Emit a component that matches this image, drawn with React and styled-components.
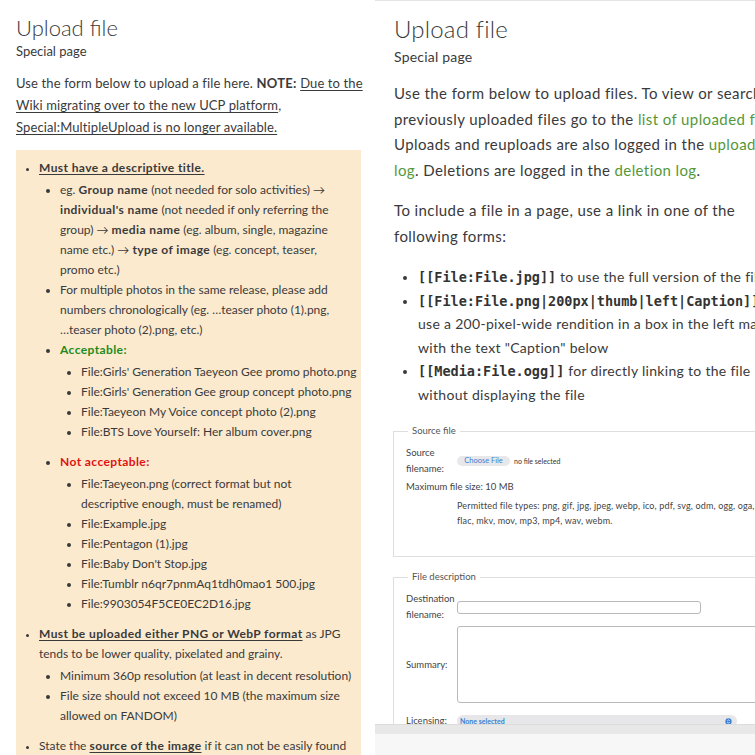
import React from "react";
import styled, { createGlobalStyle } from "styled-components";

const GlobalStyle = createGlobalStyle`
  html, body { margin: 0; padding: 0; background: #fff; }
  body { font-family: Lato, "Noto Sans", sans-serif; }
`;

const Page = styled.div`
  display: grid;
  grid-template-columns: 375px 380px;
  width: 755px;
  height: 755px;
  overflow: hidden;
`;

/* ---------- left panel ---------- */
const Left = styled.div`
  display: flex;
  flex-direction: column;
  padding: 0 14px 0 16px;
  overflow: hidden;
  color: #3a3a3a;
  font-family: Lato, "Noto Sans", sans-serif;
`;

const PhotoStrip = styled.div`
  height: 2px;
  margin: 0 -14px 0 -16px;
  background: linear-gradient(90deg, #9a9a9a 0 11%, #c8b59c 11% 89%, #9a9a9a 89%);
`;

const Title = styled.h1`
  margin: 15px 0 0;
  font-size: 22px;
  line-height: 26px;
  font-weight: 300;
  color: #3a3a3a;
`;

const Subtitle = styled.div`
  margin-top: 2px;
  font-size: 13px;
  line-height: 16px;
  color: #3a3a3a;
`;

const Intro = styled.p`
  margin: 13px 0 0;
  font-size: 13px;
  line-height: 22px;
  letter-spacing: 0.12px;
  white-space: nowrap;
  & b { letter-spacing: 0.3px; }
`;

const DarkLink = styled.span`
  text-decoration: underline;
  text-underline-offset: 2px;
  text-decoration-thickness: 1px;
`;

const NoteBox = styled.div`
  margin-top: 12px;
  background: #fceacf;
  padding: 8px 0 10px;
  width: 345px;
  flex: 1;
`;

const List = styled.ul`
  margin: ${(p) => (p.$level === 1 ? "0" : "2px 0 10px")};
  padding-left: ${(p) => (p.$level === 1 ? "23px" : "21px")};
  list-style: disc;
  font-size: 12px;
  line-height: 20px;
  white-space: nowrap;
  & b { letter-spacing: 0.4px; }
  & > li::marker { font-size: ${(p) => (p.$level === 1 ? "10px" : "11px")}; }
  & > li + li { margin-top: ${(p) => (p.$level === 1 ? "10px" : "0")}; }
`;

const BoldU = styled.span`
  font-weight: 700;
  letter-spacing: 0.4px;
  text-decoration: underline;
  text-underline-offset: 2px;
`;

const Verdict = styled.span`
  font-weight: 700;
  letter-spacing: 0.4px;
  color: ${(p) => (p.$ok ? "#1c8a1c" : "#e0120f")};
`;

/* ---------- right panel ---------- */
const Right = styled.div`
  display: grid;
  grid-template-rows: 724px 10px 21px;
  overflow: hidden;
  color: #3a3a3a;
  font-family: Lato, "Noto Sans", sans-serif;
`;

const Scroll = styled.div`
  overflow: hidden;
  padding-left: 19px;
  border-top: 1px solid #e4e4e4;
`;

const RTitle = styled.h1`
  margin: 14px 0 0;
  font-size: 24px;
  line-height: 28px;
  font-weight: 300;
  letter-spacing: 0.2px;
  color: #3a3a3a;
`;

const RSubtitle = styled.div`
  margin-top: 5px;
  font-size: 14px;
  line-height: 18px;
  letter-spacing: 0.2px;
`;

const RPara = styled.p`
  margin: 15px 0 0;
  font-size: 15px;
  line-height: 25.5px;
  letter-spacing: 0.4px;
  white-space: nowrap;
`;

const GreenLink = styled.span`
  color: #55983a;
`;

const CodeList = styled.ul`
  margin: 16px 0 0;
  padding-left: 24px;
  font-size: 14px;
  line-height: 23.5px;
  letter-spacing: 0.3px;
  white-space: nowrap;
  & > li::marker { font-size: 12px; }
`;

const Code = styled.code`
  font-family: "DejaVu Sans Mono", "Liberation Mono", monospace;
  font-weight: 700;
  font-size: 13.5px;
  line-height: 1;
  letter-spacing: 0;
  color: #333;
`;

const Fieldset = styled.fieldset`
  margin: ${(p) => (p.$first ? "19px" : "14px")} 0 0 -1px;
  padding: 8px 12px ${(p) => (p.$first ? "28px" : "20px")};
  width: 500px;
  border: 1px solid #dedede;
  border-right: none;
  min-width: 0;
`;

const Legend = styled.legend`
  margin-left: 2px;
  padding: 0 4px;
  font-size: 9.5px;
  line-height: 12px;
  color: #555;
`;

const FormGrid = styled.div`
  display: grid;
  grid-template-columns: 51px 1fr;
  align-items: center;
  row-gap: ${(p) => p.$gap || "2px"};
  font-size: 9.5px;
  line-height: 16px;
  color: #444;
`;

const FullRow = styled.div`
  grid-column: 1 / span 2;
`;

const FieldText = styled.div`
  grid-column: 2;
  font-size: 9px;
  line-height: 14.5px;
  letter-spacing: 0.15px;
  white-space: nowrap;
  margin-top: 2px;
`;

const FileRow = styled.div`
  display: flex;
  align-items: center;
  gap: 4px;
`;

const ChooseBtn = styled.span`
  display: inline-flex;
  align-items: center;
  justify-content: center;
  width: 53px;
  height: 10px;
  border-radius: 6px;
  background: #e8e8eb;
  color: #3b7fd4;
  font-size: 7.5px;
`;

const NoFile = styled.span`
  font-size: 7px;
  color: #333;
`;

const TextInput = styled.div`
  width: 242px;
  height: 11px;
  border: 1px solid #b9b9b9;
  border-radius: 3px;
`;

const TextArea = styled.div`
  width: 320px;
  height: 75px;
  border: 1px solid #b9b9b9;
  border-radius: 3px;
`;

const LicenseLabel = styled.div`
  margin-top: 7px;
`;

const Select = styled.div`
  display: flex;
  align-items: center;
  justify-content: space-between;
  margin-top: 7px;
  width: 272px;
  height: 12px;
  padding: 0 5px 0 3px;
  border-radius: 6px;
  background: #e7e7ea;
  color: #3b7fd4;
  font-size: 7px;
  font-weight: 700;
`;

const BrowserBar = styled.div`
  background: #e8e8e8;
  border-top: 1px solid #dcdcdc;
`;

const BrowserBottom = styled.div`
  background: #f7f7f7;
`;

const Updown = () => (
  <svg width="7" height="7" viewBox="0 0 8 8">
    <circle cx="4" cy="4" r="3.6" fill="#3b7fd4" />
    <path d="M2.6 3.4 L4 2 L5.4 3.4 M2.6 4.6 L4 6 L5.4 4.6" stroke="#fff" strokeWidth="0.9" fill="none" />
  </svg>
);

export default function App() {
  return (
    <>
      <GlobalStyle />
      <Page>
        <Left>
          <PhotoStrip />
          <Title>Upload file</Title>
          <Subtitle>Special page</Subtitle>
          <Intro>
            Use the form below to upload a file here. <b>NOTE:</b>{" "}
            <DarkLink>Due to the</DarkLink>
            <br />
            <DarkLink>Wiki migrating over to the new UCP platform</DarkLink>,
            <br />
            <DarkLink>Special:MultipleUpload is no longer available.</DarkLink>
          </Intro>
          <NoteBox>
            <List $level={1}>
              <li>
                <BoldU>Must have a descriptive title.</BoldU>
                <List $level={2}>
                  <li>
                    eg. <b>Group name</b> (not needed for solo activities) →
                    <br />
                    <b>individual's name</b> (not needed if only referring the
                    <br />
                    group) → <b>media name</b> (eg. album, single, magazine
                    <br />
                    name etc.) → <b>type of image</b> (eg. concept, teaser,
                    <br />
                    promo etc.)
                  </li>
                  <li>
                    For multiple photos in the same release, please add
                    <br />
                    numbers chronologically (eg. …teaser photo (1).png,
                    <br />
                    …teaser photo (2).png, etc.)
                  </li>
                  <li>
                    <Verdict $ok>Acceptable:</Verdict>
                    <List $level={3}>
                      <li>File:Girls' Generation Taeyeon Gee promo photo.png</li>
                      <li>File:Girls' Generation Gee group concept photo.png</li>
                      <li>File:Taeyeon My Voice concept photo (2).png</li>
                      <li>File:BTS Love Yourself: Her album cover.png</li>
                    </List>
                  </li>
                  <li>
                    <Verdict>Not acceptable:</Verdict>
                    <List $level={3}>
                      <li>
                        File:Taeyeon.png (correct format but not
                        <br />
                        descriptive enough, must be renamed)
                      </li>
                      <li>File:Example.jpg</li>
                      <li>File:Pentagon (1).jpg</li>
                      <li>File:Baby Don't Stop.jpg</li>
                      <li>File:Tumblr n6qr7pnmAq1tdh0mao1 500.jpg</li>
                      <li>File:9903054F5CE0EC2D16.jpg</li>
                    </List>
                  </li>
                </List>
              </li>
              <li>
                <BoldU>Must be uploaded either PNG or WebP format</BoldU> as JPG
                <br />
                tends to be lower quality, pixelated and grainy.
                <List $level={2}>
                  <li>Minimum 360p resolution (at least in decent resolution)</li>
                  <li>
                    File size should not exceed 10 MB (the maximum size
                    <br />
                    allowed on FANDOM)
                  </li>
                </List>
              </li>
              <li>
                State the <BoldU>source of the image</BoldU> if it can not be easily found
              </li>
            </List>
          </NoteBox>
        </Left>

        <Right>
          <Scroll>
            <RTitle>Upload file</RTitle>
            <RSubtitle>Special page</RSubtitle>
            <RPara>
              Use the form below to upload files. To view or search
              <br />
              previously uploaded files go to the <GreenLink>list of uploaded files</GreenLink>.
              <br />
              Uploads and reuploads are also logged in the <GreenLink>upload</GreenLink>
              <br />
              <GreenLink>log</GreenLink>. Deletions are logged in the{" "}
              <GreenLink>deletion log</GreenLink>.
            </RPara>
            <RPara>
              To include a file in a page, use a link in one of the
              <br />
              following forms:
            </RPara>
            <CodeList>
              <li>
                <Code>[[File:File.jpg]]</Code> to use the full version of the file
              </li>
              <li>
                <Code>[[File:File.png|200px|thumb|left|Caption]]</Code> to
                <br />
                use a 200-pixel-wide rendition in a box in the left margin
                <br />
                with the text "Caption" below
              </li>
              <li>
                <Code>[[Media:File.ogg]]</Code> for directly linking to the file
                <br />
                without displaying the file
              </li>
            </CodeList>

            <Fieldset $first>
              <Legend>Source file</Legend>
              <FormGrid>
                <div>
                  Source
                  <br />
                  filename:
                </div>
                <FileRow>
                  <ChooseBtn>Choose File</ChooseBtn>
                  <NoFile>no file selected</NoFile>
                </FileRow>
                <FullRow>Maximum file size: 10 MB</FullRow>
                <FieldText>
                  Permitted file types: png, gif, jpg, jpeg, webp, ico, pdf, svg, odm, ogg, oga, ogv,
                  <br />
                  flac, mkv, mov, mp3, mp4, wav, webm.
                </FieldText>
              </FormGrid>
            </Fieldset>

            <Fieldset>
              <Legend>File description</Legend>
              <FormGrid $gap="3px">
                <div>
                  Destination
                  <br />
                  filename:
                </div>
                <TextInput />
                <div>Summary:</div>
                <TextArea />
                <LicenseLabel>Licensing:</LicenseLabel>
                <Select>
                  <span>None selected</span>
                  <Updown />
                </Select>
              </FormGrid>
            </Fieldset>
          </Scroll>
          <BrowserBar />
          <BrowserBottom />
        </Right>
      </Page>
    </>
  );
}
